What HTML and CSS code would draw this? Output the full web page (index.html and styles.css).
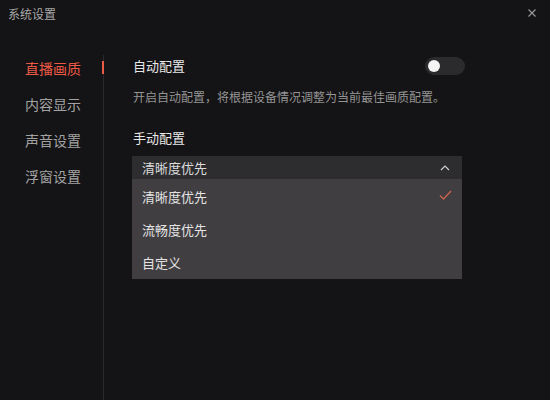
FILE: index.html
```html
<!DOCTYPE html>
<html lang="zh">
<head>
<meta charset="utf-8">
<link rel="stylesheet" href="styles.css">
</head>
<body>
<div class="window">
  <header class="titlebar">
    <span class="title">系统设置</span>
    <span class="close">
      <svg width="8" height="8" viewBox="0 0 8 8"><path d="M0.5 0.5 L7.5 7.5 M7.5 0.5 L0.5 7.5" stroke="#9a9a9a" stroke-width="1.1" fill="none"/></svg>
    </span>
  </header>
  <div class="main">
    <nav class="sidebar">
      <div class="nav-item active">直播画质</div>
      <div class="nav-item">内容显示</div>
      <div class="nav-item">声音设置</div>
      <div class="nav-item">浮窗设置</div>
    </nav>
    <section class="content">
      <div class="row">
        <span class="label">自动配置</span>
        <span class="toggle"><span class="knob"></span></span>
      </div>
      <p class="desc">开启自动配置，将根据设备情况调整为当前最佳画质配置。</p>
      <div class="label manual">手动配置</div>
      <div class="select">
        <div class="select-head">
          <span>清晰度优先</span>
          <svg width="10" height="6" viewBox="0 0 10 6"><path d="M1 5 L5 1 L9 5" stroke="#cfcfcf" stroke-width="1.2" fill="none"/></svg>
        </div>
        <div class="menu">
          <div class="opt"><span>清晰度优先</span>
            <svg width="13" height="10" viewBox="0 0 13 10"><path d="M1 5.5 L4.5 9 L12 1" stroke="#c8624c" stroke-width="1.4" fill="none"/></svg>
          </div>
          <div class="opt"><span>流畅度优先</span></div>
          <div class="opt"><span>自定义</span></div>
        </div>
      </div>
    </section>
  </div>
</div>
</body>
</html>
```
FILE: styles.css
```css
* { box-sizing: border-box; }
html, body {
  margin: 0;
  padding: 0;
  background: #141315;
  font-family: "Noto Sans CJK SC", "Noto Sans", sans-serif;
}
.window {
  width: 550px;
  height: 400px;
  background: #141315;
  display: flex;
  flex-direction: column;
}
.titlebar {
  height: 30px;
  display: flex;
  align-items: center;
  justify-content: space-between;
  padding: 0 14px 2px 8px;
}
.title {
  font-size: 12px;
  color: #a9a9a9;
  line-height: 14px;
}
.close {
  display: flex;
  margin-top: -3px;
}
.main {
  flex: 1;
  display: flex;
}
.sidebar {
  width: 104px;
  border-right: 1px solid #2a292b;
  margin-top: 25px;
  padding-top: 3px;
  display: flex;
  flex-direction: column;
  gap: 16px;
}
.nav-item {
  font-size: 14px;
  line-height: 20px;
  color: #a3a3a3;
  padding-left: 25px;
  position: relative;
}
.nav-item.active { color: #ec5a45; }
.nav-item.active::after {
  content: "";
  position: absolute;
  right: -1px;
  top: 3px;
  width: 2px;
  height: 13px;
  background: #ec5a45;
}
.content {
  padding: 27px 0 0 29px;
  width: 359px;
}
.row {
  display: flex;
  justify-content: space-between;
  align-items: center;
  height: 18px;
}
.label {
  font-size: 13px;
  color: #e8e8e8;
  line-height: 18px;
}
.toggle {
  width: 40px;
  height: 18px;
  border-radius: 9px;
  background: #2b2a2d;
  display: flex;
  align-items: center;
  padding-left: 3px;
  margin-right: -2px;
}
.knob {
  width: 12px;
  height: 12px;
  border-radius: 50%;
  background: #f4f4f4;
}
.desc {
  margin: 14px 0 0;
  font-size: 12px;
  color: #949494;
  line-height: 16px;
}
.manual {
  margin-top: 24px;
}
.select {
  margin-top: 9px;
  margin-left: -1px;
  width: 330px;
}
.select-head {
  height: 23px;
  background: #2d2c2f;
  display: flex;
  align-items: center;
  justify-content: space-between;
  padding: 0 12px 0 10px;
  font-size: 13px;
  color: #dcdcdc;
}
.menu {
  background: #403e41;
  height: 100px;
  padding-top: 1px;
}
.opt {
  height: 33px;
  display: flex;
  align-items: center;
  justify-content: space-between;
  padding: 0 10px;
  font-size: 13px;
  color: #e4e4e4;
}
.opt svg { margin-top: -4px; }
```
